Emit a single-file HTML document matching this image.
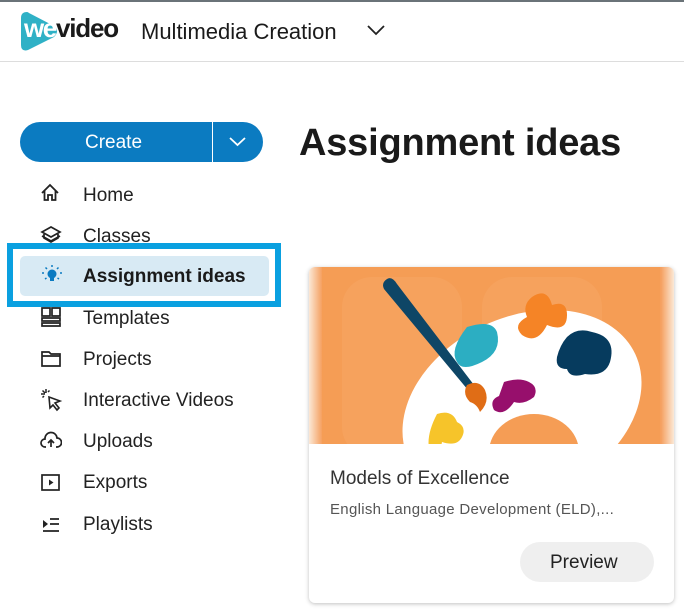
<!DOCTYPE html>
<html><head><style>
*{margin:0;padding:0;box-sizing:border-box}
body{width:684px;height:609px;background:#fff;font-family:"Liberation Sans",sans-serif;position:relative;overflow:hidden;color:#1a1a1a}
.top{position:absolute;left:0;top:0;width:684px;height:2px;background:#6a7378}
.hdr{position:absolute;left:0;top:61px;width:684px;height:1px;background:#ddd}
.t{position:absolute;white-space:nowrap}
.nav{position:absolute;left:83px;font-size:19px;color:#222}
.ic{position:absolute;left:40px}
</style></head><body>
<div class="top"></div>
<svg style="position:absolute;left:20px;top:11px" width="40" height="41" viewBox="0 0 40 41"><path d="M7 1 Q1 1 1 7 V34 Q1 41 8 39 L34 26 Q40 20 34 15 L9 2 Q8 1 7 1Z" fill="#2fb1c6"/></svg>
<div class="t" style="left:24px;top:13px;font-size:26px;font-weight:bold;color:#fff;letter-spacing:-1.5px">we</div>
<div class="t" style="left:56px;top:13px;font-size:26px;font-weight:bold;color:#1a1a1a;letter-spacing:-1.2px">video</div>
<div class="t" style="left:141px;top:19px;font-size:22px;color:#1a1a1a">Multimedia Creation</div>
<svg style="position:absolute;left:367px;top:25px" width="18" height="11"><path d="M1 1 L9 9 L17 1" fill="none" stroke="#222" stroke-width="1.8"/></svg>
<div class="hdr"></div>
<div style="position:absolute;left:20px;top:122px;width:243px;height:40px;border-radius:20px;background:#0b7bc1"></div>
<div style="position:absolute;left:212px;top:122px;width:1px;height:40px;background:#fff"></div>
<div class="t" style="left:85px;top:132px;font-size:19px;color:#fff">Create</div>
<svg style="position:absolute;left:229px;top:137px" width="17" height="10"><path d="M1 1 L8.5 8 L16 1" fill="none" stroke="#fff" stroke-width="1.8"/></svg>
<div class="t" style="left:299px;top:122px;font-size:38px;font-weight:bold;color:#1a1a1a;letter-spacing:-0.2px">Assignment ideas</div>
<svg class="ic" style="top:183px" width="20" height="20" viewBox="0 0 20 20"><path d="M2 10 L10 2 L18 10 M4.5 8 V17 H8 V12 H12 V17 H15.5 V8" fill="none" stroke="#222" stroke-width="1.8"/></svg>
<div class="nav" style="top:185px">Home</div>
<svg class="ic" style="top:225px" width="22" height="20" viewBox="0 0 22 20"><path d="M2 7 L11 2 L20 7 L11 12Z M2 11 L11 16 L20 11 M4 9 V13 L11 17 L18 13 V9" fill="none" stroke="#222" stroke-width="1.7"/></svg>
<div class="nav" style="top:226px">Classes</div>
<div style="position:absolute;left:7px;top:243px;width:274px;height:64px;border:6px solid #0aa0e0"></div>
<div style="position:absolute;left:20px;top:256px;width:249px;height:40px;background:#d8eaf4;border-radius:5px"></div>
<svg class="ic" style="top:264px;left:41px" width="22" height="22" viewBox="0 0 22 22"><circle cx="11" cy="10" r="4.5" fill="#0b7bc1"/><rect x="9" y="14" width="4" height="3" fill="#0b7bc1"/><path d="M11 1v2M3 9H1M21 9h-2M4.5 3.5l1.5 1.5M17.5 3.5L16 5M4 15l1.5-1M18 15l-1.5-1" stroke="#0b7bc1" stroke-width="1.5"/></svg>
<div class="nav" style="top:266px;font-weight:bold;color:#1a1a1a">Assignment ideas</div>
<svg class="ic" style="top:306px" width="22" height="22" viewBox="0 0 22 22"><path d="M2 2h8v8H2zM12 2h8v8h-8zM2 12h18v3H2zM2 17h18v3H2z" fill="none" stroke="#222" stroke-width="1.7"/></svg>
<div class="nav" style="top:308px">Templates</div>
<svg class="ic" style="top:349px" width="22" height="20" viewBox="0 0 22 20"><path d="M2 3h7l2 2h9v12H2z M2 7h18" fill="none" stroke="#222" stroke-width="1.7"/></svg>
<div class="nav" style="top:349px">Projects</div>
<svg class="ic" style="top:388px" width="24" height="24" viewBox="0 0 24 24"><path d="M9 9 L20 13 L15 15 L19 20 L17 22 L13 17 L10 20Z" fill="none" stroke="#222" stroke-width="1.6"/><path d="M6 1v4M1 6h4M2.5 2.5l2.5 2.5M9.5 2.5L8 4M2.5 9.5L4 8" stroke="#222" stroke-width="1.5"/></svg>
<div class="nav" style="top:390px">Interactive Videos</div>
<svg class="ic" style="top:431px" width="22" height="20" viewBox="0 0 22 20"><path d="M6 16 H5 A4 4 0 0 1 5 8 A6 6 0 0 1 17 7 A4.5 4.5 0 0 1 17 16 H16 M11 16 V9 M8 12 L11 9 L14 12" fill="none" stroke="#222" stroke-width="1.7"/></svg>
<div class="nav" style="top:431px">Uploads</div>
<svg class="ic" style="top:473px" width="22" height="20" viewBox="0 0 22 20"><rect x="2" y="2" width="17" height="15" fill="none" stroke="#222" stroke-width="1.7"/><path d="M9 6.5v6l4.5-3z" fill="#222"/></svg>
<div class="nav" style="top:472px">Exports</div>
<svg class="ic" style="top:515px" width="22" height="20" viewBox="0 0 22 20"><path d="M3 5v8l5-4z" fill="#222"/><path d="M10 4h9M10 9h9M3 16h16" stroke="#222" stroke-width="1.7"/></svg>
<div class="nav" style="top:514px">Playlists</div>
<div style="position:absolute;left:309px;top:267px;width:365px;height:336px;border-radius:6px;background:#fff;box-shadow:0 1px 4px rgba(0,0,0,.25);overflow:hidden">
<div style="position:absolute;left:0;top:0;width:365px;height:177px;background:linear-gradient(90deg,#fbe8d6,#f5a060 13px,#f5a060 352px,#fbe8d6)"></div>
<svg style="position:absolute;left:13px;top:0" width="338" height="177" viewBox="0 0 338 177">
<rect width="338" height="177" fill="#f59d55"/>
<rect x="20" y="10" width="120" height="180" rx="30" fill="#f7a865" opacity=".5"/>
<rect x="160" y="10" width="120" height="180" rx="30" fill="#f7a865" opacity=".5"/>
<ellipse cx="200" cy="140" rx="125" ry="90" transform="rotate(-25 200 140)" fill="#fff"/>
<ellipse cx="212" cy="185" rx="45" ry="38" fill="#f59d55"/>
<path d="M210 30 q15-10 20 8 q15-5 15 10 q0 18-20 10 q-10 20-25 10 q-10-10 5-18 q-5-12 5-20z" fill="#f58426"/>
<path d="M245 70 q10-10 25-5 q25 5 18 30 q-5 15-25 12 q-15 5-18-5 q-12 0-10-12 q3-12 10-20z" fill="#063b5e"/>
<path d="M145 60 q25-8 30 5 q5 20-15 30 q-20 10-25 0 q-8-12 10-35z" fill="#2caec2"/>
<path d="M182 115 q15-5 25 0 q10 5 5 15 q-10 8-20 5 q-10 15-20 8 q-5-10 5-14z" fill="#970f6c"/>
<path d="M115 147 q15-5 20 8 q10 5 5 15 q-5 10-20 5 l-2 10 h-10 q-5-15 7-38z" fill="#f6c42a"/>
<path d="M65 12 q5-3 10 5 L152 118 l-6 5 L62 22 q-3-6 3-10z" fill="#0e4666"/>
<path d="M145 118 q12-6 18 5 q5 12-5 22 q-3-8-10-10 q-8-8-3-17z" fill="#e06d16"/>
</svg>
<div class="t" style="left:21px;top:201px;font-size:19px;color:#333">Models of Excellence</div>
<div class="t" style="left:21px;top:234px;font-size:15px;color:#555;letter-spacing:.3px">English Language Development (ELD),...</div>
<div style="position:absolute;left:211px;top:275px;width:134px;height:40px;border-radius:20px;background:#efefef"></div>
<div class="t" style="left:241px;top:285px;font-size:19px;color:#222">Preview</div>
</div>
</body></html>
